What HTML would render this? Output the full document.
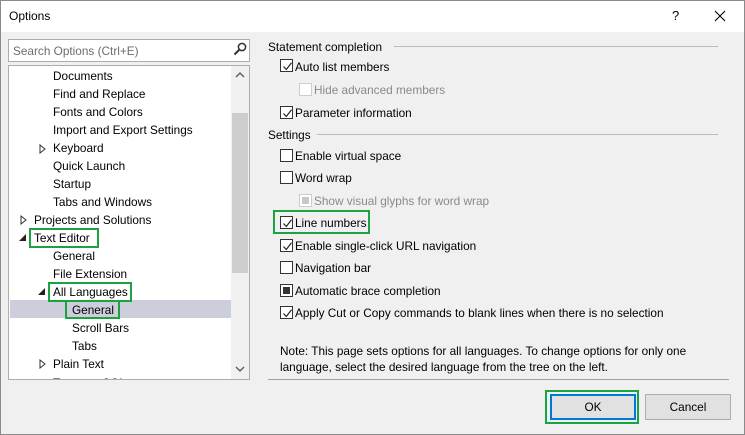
<!DOCTYPE html>
<html><head><style>
*{margin:0;padding:0;box-sizing:border-box}
body{width:745px;height:435px;overflow:hidden;background:#f0f0f0;font-family:"Liberation Sans",sans-serif;font-size:11.8px;color:#000;position:relative}
.a{position:absolute;white-space:nowrap}
.t{position:absolute;white-space:nowrap;line-height:20px;height:18px}
.cb{position:absolute;width:13px;height:13px;border:1px solid #333;background:#fff}
.cb svg{position:absolute;left:1px;top:1px}
.g{position:absolute;border:2px solid #1aa340}
</style></head><body>
<div class="a" style="left:0;top:0;width:745px;height:435px;border:1px solid #8a8a8a"></div>
<div class="a" style="left:1px;top:1px;width:743px;height:31px;background:#fff"></div>
<div class="a" style="left:9px;top:9px;font-size:12px">Options</div>
<div class="a" style="left:672px;top:8px;font-size:13px">?</div>
<svg class="a" style="left:714px;top:10px" width="12" height="12"><path d="M1 1L11 11M11 1L1 11" stroke="#000" stroke-width="1.1"/></svg>

<div class="a" style="left:8px;top:39px;width:242px;height:23px;background:#fff;border:1px solid #adadad"></div>
<div class="a" style="left:13px;top:44px;color:#6d6d6d">Search Options (Ctrl+E)</div>
<svg class="a" style="left:233px;top:42px" width="14" height="14"><circle cx="9" cy="5" r="3.6" fill="none" stroke="#333" stroke-width="1.5"/><path d="M6.5 7.5L1.5 12.5" stroke="#333" stroke-width="2"/></svg>

<div class="a" style="left:8px;top:65px;width:242px;height:315px;background:#fff;border:1px solid #adadad"></div>
<div class="a" style="left:231px;top:66px;width:18px;height:313px;background:#f0f0f0"></div>
<div class="a" style="left:232px;top:113px;width:16px;height:160px;background:#cdcdcd"></div>
<svg class="a" style="left:235px;top:71px" width="10" height="8"><path d="M1 6L5 2L9 6" fill="none" stroke="#555" stroke-width="1.3"/></svg>
<svg class="a" style="left:235px;top:365px" width="10" height="8"><path d="M1 2L5 6L9 2" fill="none" stroke="#555" stroke-width="1.3"/></svg>
<div class="a" style="left:10px;top:300px;width:221px;height:18px;background:#cccedb"></div>

<div class="t" style="left:53px;top:66px">Documents</div>
<div class="t" style="left:53px;top:84px">Find and Replace</div>
<div class="t" style="left:53px;top:102px">Fonts and Colors</div>
<div class="t" style="left:53px;top:120px">Import and Export Settings</div>
<svg class="a" style="left:39px;top:144px" width="7" height="10"><path d="M1 1L6 5L1 9Z" fill="#fff" stroke="#333"/></svg>
<div class="t" style="left:53px;top:138px">Keyboard</div>
<div class="t" style="left:53px;top:156px">Quick Launch</div>
<div class="t" style="left:53px;top:174px">Startup</div>
<div class="t" style="left:53px;top:192px">Tabs and Windows</div>
<svg class="a" style="left:20px;top:215px" width="7" height="10"><path d="M1 1L6 5L1 9Z" fill="#fff" stroke="#333"/></svg>
<div class="t" style="left:34px;top:210px">Projects and Solutions</div>
<svg class="a" style="left:19px;top:234px" width="8" height="8"><path d="M7 0L7 7L0 7Z" fill="#222"/></svg>
<div class="t" style="left:34px;top:228px">Text Editor</div>
<div class="t" style="left:53px;top:246px">General</div>
<div class="t" style="left:53px;top:264px">File Extension</div>
<svg class="a" style="left:38px;top:288px" width="8" height="8"><path d="M7 0L7 7L0 7Z" fill="#222"/></svg>
<div class="t" style="left:53px;top:282px">All Languages</div>
<div class="t" style="left:72px;top:300px">General</div>
<div class="t" style="left:72px;top:318px">Scroll Bars</div>
<div class="t" style="left:72px;top:336px">Tabs</div>
<svg class="a" style="left:39px;top:359px" width="7" height="10"><path d="M1 1L6 5L1 9Z" fill="#fff" stroke="#333"/></svg>
<div class="t" style="left:53px;top:354px">Plain Text</div>
<div class="a" style="left:9px;top:371px;width:222px;height:8px;overflow:hidden"><div class="t" style="left:44px;top:2px">Transact-SQL</div></div>

<div class="g" style="left:29px;top:228px;width:70px;height:20px"></div>
<div class="g" style="left:48px;top:282px;width:84px;height:20px"></div>
<div class="g" style="left:65px;top:300px;width:55px;height:19px"></div>

<div class="t" style="left:268px;top:37px">Statement completion</div>
<div class="a" style="left:394px;top:46px;width:324px;height:1px;background:#bcbcbc"></div>
<div class="t" style="left:268px;top:125px">Settings</div>
<div class="a" style="left:317px;top:134px;width:401px;height:1px;background:#bcbcbc"></div>

<div class="cb" style="left:280px;top:59px"><svg width="11" height="11"><path d="M1.5 5.5L4.3 8.5L9.5 1.8" fill="none" stroke="#222" stroke-width="1.2"/></svg></div><div class="t" style="left:295px;top:57px">Auto list members</div>
<div class="cb" style="left:299px;top:83px;border-color:#ccc"></div><div class="t" style="left:314px;top:80px;color:#8a8a8a">Hide advanced members</div>
<div class="cb" style="left:280px;top:106px"><svg width="11" height="11"><path d="M1.5 5.5L4.3 8.5L9.5 1.8" fill="none" stroke="#222" stroke-width="1.2"/></svg></div><div class="t" style="left:295px;top:103px">Parameter information</div>
<div class="cb" style="left:280px;top:149px"></div><div class="t" style="left:295px;top:146px">Enable virtual space</div>
<div class="cb" style="left:280px;top:171px"></div><div class="t" style="left:295px;top:168px">Word wrap</div>
<div class="cb" style="left:299px;top:194px;border-color:#ccc"><div class="a" style="left:2px;top:2px;width:7px;height:7px;background:#c8c8c8"></div></div><div class="t" style="left:314px;top:191px;color:#8a8a8a">Show visual glyphs for word wrap</div>
<div class="cb" style="left:280px;top:216px"><svg width="11" height="11"><path d="M1.5 5.5L4.3 8.5L9.5 1.8" fill="none" stroke="#222" stroke-width="1.2"/></svg></div><div class="t" style="left:295px;top:213px">Line numbers</div>
<div class="cb" style="left:280px;top:239px"><svg width="11" height="11"><path d="M1.5 5.5L4.3 8.5L9.5 1.8" fill="none" stroke="#222" stroke-width="1.2"/></svg></div><div class="t" style="left:295px;top:236px">Enable single-click URL navigation</div>
<div class="cb" style="left:280px;top:261px"></div><div class="t" style="left:295px;top:258px">Navigation bar</div>
<div class="cb" style="left:280px;top:284px"><div class="a" style="left:2px;top:2px;width:7px;height:7px;background:#333"></div></div><div class="t" style="left:295px;top:281px">Automatic brace completion</div>
<div class="cb" style="left:280px;top:306px"><svg width="11" height="11"><path d="M1.5 5.5L4.3 8.5L9.5 1.8" fill="none" stroke="#222" stroke-width="1.2"/></svg></div><div class="t" style="left:295px;top:303px">Apply Cut or Copy commands to blank lines when there is no selection</div>
<div class="g" style="left:273px;top:210px;width:97px;height:24px"></div>

<div class="t" style="left:280px;top:341px">Note: This page sets options for all languages. To change options for only one</div>
<div class="t" style="left:280px;top:357px">language, select the desired language from the tree on the left.</div>
<div class="a" style="left:268px;top:379px;width:461px;height:1px;background:#a0a0a0"></div>

<div class="g" style="left:545px;top:390px;width:94px;height:34px"></div>
<div class="a" style="left:550px;top:394px;width:86px;height:26px;background:#e1e1e1;border:2px solid #0078d7;text-align:center;line-height:22px">OK</div>
<div class="a" style="left:645px;top:394px;width:86px;height:26px;background:#e1e1e1;border:1px solid #adadad;text-align:center;line-height:24px">Cancel</div>
</body></html>
